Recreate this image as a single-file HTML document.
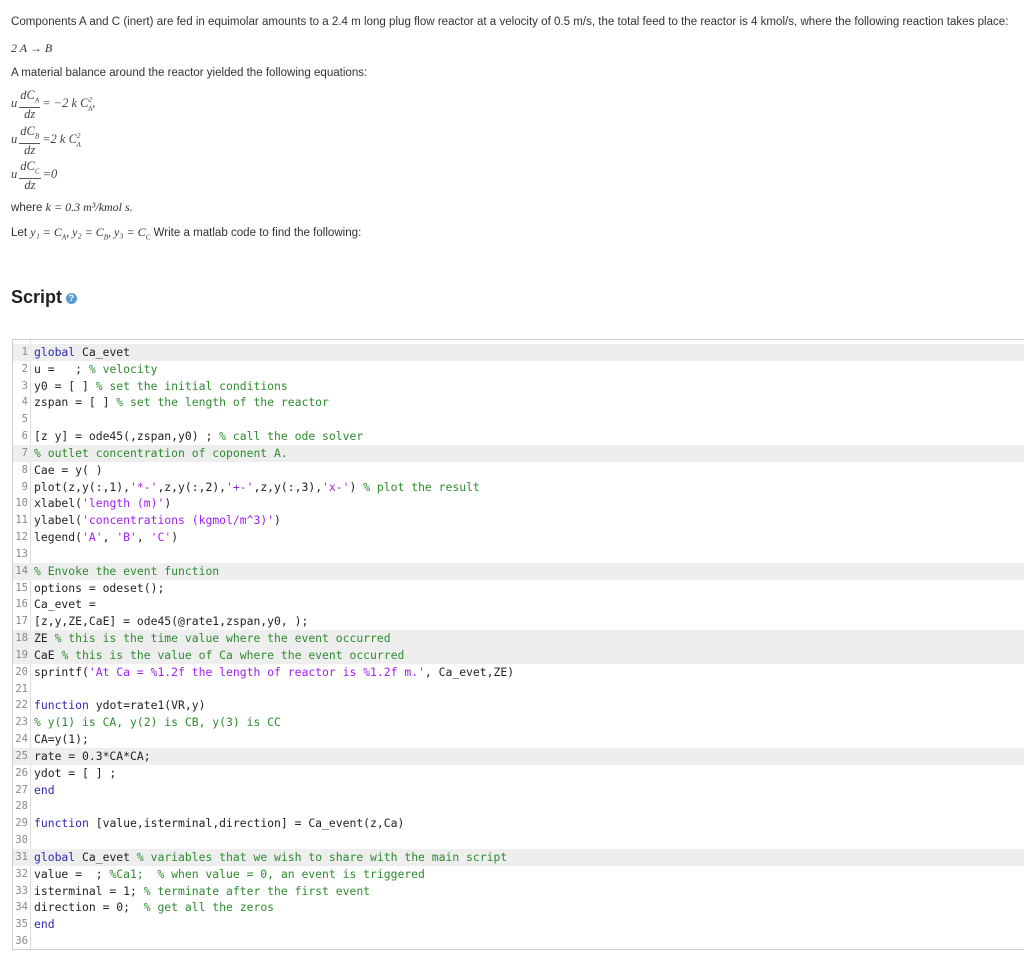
<!DOCTYPE html>
<html><head><meta charset="utf-8"><style>
body{margin:0;background:#fff;width:1024px;height:955px;overflow:hidden;font-family:"Liberation Sans",Arial,sans-serif;color:#333;}
.p{position:absolute;left:11px;font-size:11.55px;white-space:nowrap;}
.m{font-family:"Liberation Serif",serif;font-style:italic;font-size:12px;}
.eq{position:absolute;left:11px;font-family:"Liberation Serif",serif;font-style:italic;font-size:12.5px;color:#444;}
.fr{display:inline-block;vertical-align:middle;text-align:center;margin:0 2px;}
.fr span{display:block;line-height:12px;}
.fr .n{border-bottom:1px solid #555;padding:0 1px;}
h2{position:absolute;left:11px;top:287px;margin:0;font-size:18px;font-weight:bold;color:#222;}
.q{display:inline-block;width:11px;height:11px;border-radius:50%;background:#5a9bd5;color:#fff;font-size:9px;text-align:center;line-height:11px;vertical-align:2px;margin-left:4px;}
.ed{position:absolute;left:12px;top:339px;width:1020px;height:609px;border-top:1px solid #ccc;border-left:1px solid #ccc;border-bottom:1px solid #ccc;}
.gut{position:absolute;left:0;top:0;width:17px;height:609px;border-right:1px solid #ddd;background:#fff;}
.lines{position:absolute;left:0;top:4px;width:1020px;font-family:"DejaVu Sans Mono",monospace;font-size:11.4px;}
.l{height:16.83px;line-height:16.83px;white-space:pre;position:relative;}
.l.h{background:#eee;}
.l .ln{position:absolute;left:0;width:15px;text-align:right;color:#888;font-size:10.5px;}
.l .c{position:absolute;left:21px;color:#222;}
.k{color:#2b2bb0}.g{color:#2e8b2e}.s{color:#a020f0}
</style></head><body>
<div class="p" style="top:16px">Components A and C (inert) are fed in equimolar amounts to a 2.4 m long plug flow reactor at a velocity of 0.5 m/s, the total feed to the reactor is 4 kmol/s, where the following reaction takes place:</div>
<div class="p m" style="top:41px">2 A → B</div>
<div class="p" style="top:67px">A material balance around the reactor yielded the following equations:</div>
<div class="eq" style="top:89px">u<span class="fr"><span class="n">dC<sub style="font-size:7px">A</sub></span><span>dz</span></span>= −2 k C<sup style="font-size:7px">2</sup><sub style="font-size:7px;margin-left:-4px">A</sub>,</div>
<div class="eq" style="top:125px">u<span class="fr"><span class="n">dC<sub style="font-size:7px">B</sub></span><span>dz</span></span>=2 k C<sup style="font-size:7px">2</sup><sub style="font-size:7px;margin-left:-4px">A</sub></div>
<div class="eq" style="top:160px">u<span class="fr"><span class="n">dC<sub style="font-size:7px">C</sub></span><span>dz</span></span>=0</div>
<div class="p" style="top:200px">where <span class="m">k = 0.3 m³/kmol s.</span></div>
<div class="p" style="top:225px">Let <span class="m">y₁ = C<sub style="font-size:7px">A</sub>, y₂ = C<sub style="font-size:7px">B</sub>, y₃ = C<sub style="font-size:7px">C</sub></span> Write a matlab code to find the following:</div>
<h2>Script<span class="q">?</span></h2>
<div class="ed"><div class="gut"></div><div class="lines">
<div class="l h"><span class="ln">1</span><span class="c"><span class="k">global</span> Ca_evet</span></div>
<div class="l"><span class="ln">2</span><span class="c">u =   ; <span class="g">% velocity</span></span></div>
<div class="l"><span class="ln">3</span><span class="c">y0 = [ ] <span class="g">% set the initial conditions</span></span></div>
<div class="l"><span class="ln">4</span><span class="c">zspan = [ ] <span class="g">% set the length of the reactor</span></span></div>
<div class="l"><span class="ln">5</span><span class="c"></span></div>
<div class="l"><span class="ln">6</span><span class="c">[z y] = ode45(,zspan,y0) ; <span class="g">% call the ode solver</span></span></div>
<div class="l h"><span class="ln">7</span><span class="c"><span class="g">% outlet concentration of coponent A.</span></span></div>
<div class="l"><span class="ln">8</span><span class="c">Cae = y( )</span></div>
<div class="l"><span class="ln">9</span><span class="c">plot(z,y(:,1),<span class="s">'*-'</span>,z,y(:,2),<span class="s">'+-'</span>,z,y(:,3),<span class="s">'x-'</span>) <span class="g">% plot the result</span></span></div>
<div class="l"><span class="ln">10</span><span class="c">xlabel(<span class="s">'length (m)'</span>)</span></div>
<div class="l"><span class="ln">11</span><span class="c">ylabel(<span class="s">'concentrations (kgmol/m^3)'</span>)</span></div>
<div class="l"><span class="ln">12</span><span class="c">legend(<span class="s">'A'</span>, <span class="s">'B'</span>, <span class="s">'C'</span>)</span></div>
<div class="l"><span class="ln">13</span><span class="c"></span></div>
<div class="l h"><span class="ln">14</span><span class="c"><span class="g">% Envoke the event function</span></span></div>
<div class="l"><span class="ln">15</span><span class="c">options = odeset();</span></div>
<div class="l"><span class="ln">16</span><span class="c">Ca_evet =</span></div>
<div class="l"><span class="ln">17</span><span class="c">[z,y,ZE,CaE] = ode45(@rate1,zspan,y0, );</span></div>
<div class="l h"><span class="ln">18</span><span class="c">ZE <span class="g">% this is the time value where the event occurred</span></span></div>
<div class="l h"><span class="ln">19</span><span class="c">CaE <span class="g">% this is the value of Ca where the event occurred</span></span></div>
<div class="l"><span class="ln">20</span><span class="c">sprintf(<span class="s">'At Ca = %1.2f the length of reactor is %1.2f m.'</span>, Ca_evet,ZE)</span></div>
<div class="l"><span class="ln">21</span><span class="c"></span></div>
<div class="l"><span class="ln">22</span><span class="c"><span class="k">function</span> ydot=rate1(VR,y)</span></div>
<div class="l"><span class="ln">23</span><span class="c"><span class="g">% y(1) is CA, y(2) is CB, y(3) is CC</span></span></div>
<div class="l"><span class="ln">24</span><span class="c">CA=y(1);</span></div>
<div class="l h"><span class="ln">25</span><span class="c">rate = 0.3*CA*CA;</span></div>
<div class="l"><span class="ln">26</span><span class="c">ydot = [ ] ;</span></div>
<div class="l"><span class="ln">27</span><span class="c"><span class="k">end</span></span></div>
<div class="l"><span class="ln">28</span><span class="c"></span></div>
<div class="l"><span class="ln">29</span><span class="c"><span class="k">function</span> [value,isterminal,direction] = Ca_event(z,Ca)</span></div>
<div class="l"><span class="ln">30</span><span class="c"></span></div>
<div class="l h"><span class="ln">31</span><span class="c"><span class="k">global</span> Ca_evet <span class="g">% variables that we wish to share with the main script</span></span></div>
<div class="l"><span class="ln">32</span><span class="c">value =  ; <span class="g">%Ca1;  % when value = 0, an event is triggered</span></span></div>
<div class="l"><span class="ln">33</span><span class="c">isterminal = 1; <span class="g">% terminate after the first event</span></span></div>
<div class="l"><span class="ln">34</span><span class="c">direction = 0;  <span class="g">% get all the zeros</span></span></div>
<div class="l"><span class="ln">35</span><span class="c"><span class="k">end</span></span></div>
<div class="l"><span class="ln">36</span><span class="c"></span></div>
</div></div>
</body></html>
